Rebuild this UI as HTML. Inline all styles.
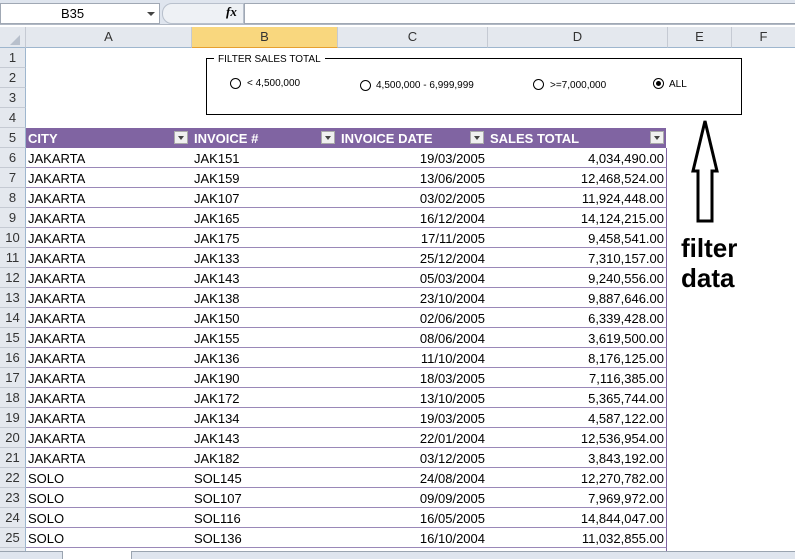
<!DOCTYPE html>
<html><head><meta charset="utf-8"><style>
html,body{margin:0;width:795px;height:559px;overflow:hidden}
body{background:#fff;font-family:"Liberation Sans",sans-serif;position:relative}
.a{position:absolute}
.rh{position:absolute;left:0;width:25px;height:19px;border-bottom:1px solid #c5cad3;border-right:1px solid #9eb6ce;background:#e4e8ee;color:#333;font-size:13px;text-align:center;line-height:20px}
.ch{position:absolute;top:27px;height:20px;background:#e4e8ee;border-right:1px solid #c5cad3;border-bottom:1px solid #9eb6ce;text-align:center;font-size:13px;line-height:20px;color:#333}
.row{position:absolute;left:26px;width:640px;height:19px;border-bottom:1px solid #9a88b8;font-size:13px;line-height:21px;color:#000}
.row span{position:absolute}
.dd{position:absolute;top:3px;width:14px;height:13px;background:#f0f0f0;border:1px solid #aaa;box-sizing:border-box}
.dd:after{content:"";position:absolute;left:3px;top:4px;border-left:3px solid transparent;border-right:3px solid transparent;border-top:4px solid #444}
.rad{position:absolute;width:11px;height:11px;border:1px solid #000;border-radius:50%;box-sizing:border-box;background:#fff}
.lbl{position:absolute;font-size:10px}
</style></head><body>
<div class="a" style="left:0;top:0;width:795px;height:24px;background:#dfe5ee;border-bottom:1px solid #b0b8c4"></div>
<div class="a" style="left:0;top:3px;width:158px;height:19px;background:#fff;border:1px solid #a0a8b4;font-size:13px;line-height:19px"><span style="position:absolute;left:60px">B35</span><span style="position:absolute;left:146px;top:8px;border-left:4px solid transparent;border-right:4px solid transparent;border-top:4px solid #444"></span></div>
<div class="a" style="left:162px;top:3px;width:80px;height:19px;background:#eef1f5;border-radius:10px 0 0 10px;border:1px solid #b8c0cc"></div>
<div class="a" style="left:226px;top:4px;font-family:'Liberation Serif',serif;font-style:italic;font-weight:bold;font-size:13px">fx</div>
<div class="a" style="left:244px;top:3px;width:551px;height:19px;background:#fff;border:1px solid #a0a8b4"></div>
<div class="ch" style="left:0;width:25px"></div>
<div class="a" style="left:10px;top:35px;border-left:10px solid transparent;border-bottom:10px solid #b8c0cc"></div>
<div class="ch" style="left:26px;width:165px">A</div>
<div class="ch" style="left:192px;width:145px;background:#f9d77e;border-bottom-color:#e6a030">B</div>
<div class="ch" style="left:338px;width:149px">C</div>
<div class="ch" style="left:488px;width:179px">D</div>
<div class="ch" style="left:668px;width:63px">E</div>
<div class="ch" style="left:732px;width:63px">F</div>
<div id="rows"></div>
<div class="a" style="left:206px;top:58px;width:534px;height:55px;border:1px solid #000"></div>
<div class="a" style="left:214px;top:54px;background:#fff;padding:0 4px;font-size:10px">FILTER SALES TOTAL</div>
<div class="rad" style="left:230px;top:78px"></div><div class="lbl" style="left:247px;top:78px">&lt; 4,500,000</div>
<div class="rad" style="left:360px;top:80px"></div><div class="lbl" style="left:376px;top:80px">4,500,000 - 6,999,999</div>
<div class="rad" style="left:533px;top:79px"></div><div class="lbl" style="left:550px;top:80px">&gt;=7,000,000</div>
<div class="rad" style="left:653px;top:78px"><div style="position:absolute;left:2px;top:2px;width:5px;height:5px;border-radius:50%;background:#000"></div></div><div class="lbl" style="left:669px;top:79px">ALL</div>
<svg class="a" style="left:680px;top:115px" width="50" height="112"><path d="M25 6 L37 56 L32 56 L32 106 L18 106 L18 56 L13 56 Z" fill="#fff" stroke="#000" stroke-width="3" stroke-linejoin="miter"/></svg>
<div class="a" style="left:681px;top:233px;font-weight:bold;font-size:26px;line-height:30px">filter<br>data</div>
<div id="tabs" class="a" style="left:0;top:551px;width:795px;height:8px;background:#dfe5ee;border-top:1px solid #9aa4b0"></div>
<div class="a" style="left:62px;top:551px;width:68px;height:8px;background:#fff;border:1px solid #9aa4b0;border-top:none"></div>
<script>
var d=[["JAKARTA","JAK151","19/03/2005","4,034,490.00"],["JAKARTA","JAK159","13/06/2005","12,468,524.00"],["JAKARTA","JAK107","03/02/2005","11,924,448.00"],["JAKARTA","JAK165","16/12/2004","14,124,215.00"],["JAKARTA","JAK175","17/11/2005","9,458,541.00"],["JAKARTA","JAK133","25/12/2004","7,310,157.00"],["JAKARTA","JAK143","05/03/2004","9,240,556.00"],["JAKARTA","JAK138","23/10/2004","9,887,646.00"],["JAKARTA","JAK150","02/06/2005","6,339,428.00"],["JAKARTA","JAK155","08/06/2004","3,619,500.00"],["JAKARTA","JAK136","11/10/2004","8,176,125.00"],["JAKARTA","JAK190","18/03/2005","7,116,385.00"],["JAKARTA","JAK172","13/10/2005","5,365,744.00"],["JAKARTA","JAK134","19/03/2005","4,587,122.00"],["JAKARTA","JAK143","22/01/2004","12,536,954.00"],["JAKARTA","JAK182","03/12/2005","3,843,192.00"],["SOLO","SOL145","24/08/2004","12,270,782.00"],["SOLO","SOL107","09/09/2005","7,969,972.00"],["SOLO","SOL116","16/05/2005","14,844,047.00"],["SOLO","SOL136","16/10/2004","11,032,855.00"]];
var h="";
for(var n=1;n<=26;n++){var t=48+(n-1)*20;h+='<div class="rh" style="top:'+t+'px">'+n+'</div>';}
h+='<div class="row" style="top:128px;background:#8064a2;color:#fff;font-weight:bold;border-bottom:none;height:20px"><span style="left:2px">CITY</span><div class="dd" style="left:148px"></div><span style="left:168px">INVOICE #</span><div class="dd" style="left:295px"></div><span style="left:315px">INVOICE DATE</span><div class="dd" style="left:444px"></div><span style="left:464px">SALES TOTAL</span><div class="dd" style="left:624px"></div></div>';
for(var i=0;i<d.length;i++){var t=148+i*20;var r=d[i];
h+='<div class="row" style="top:'+t+'px;border-right:1px solid #8064a2"><span style="left:2px">'+r[0]+'</span><span style="left:168px">'+r[1]+'</span><span style="right:181px">'+r[2]+'</span><span style="right:2px">'+r[3]+'</span></div>';}
h+='<div class="row" style="top:548px;height:3px;border-bottom:none;border-right:1px solid #8064a2"></div>';
document.getElementById("rows").innerHTML=h;
</script>
</body></html>
